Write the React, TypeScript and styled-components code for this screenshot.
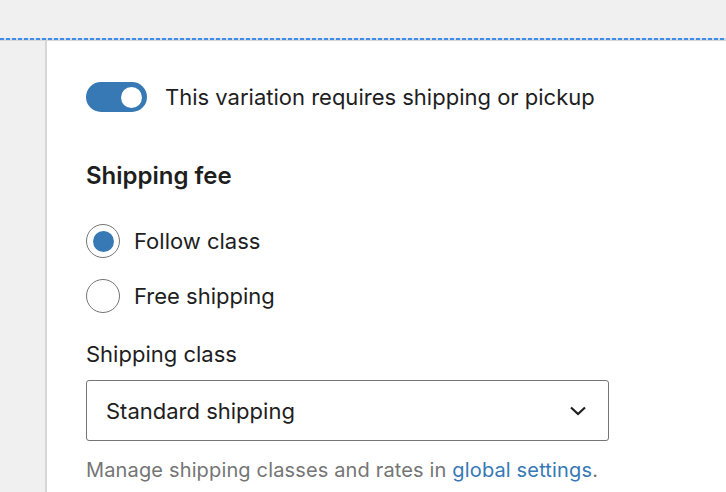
import * as React from 'react';
import styled, { createGlobalStyle } from 'styled-components';

/* ==================== [Style] ==================== */
const Global = createGlobalStyle`
    body {
        margin: 0;
        background: #f0f0f0;
        font-family: Inter, "Noto Sans", sans-serif;
        color: #1e1e1e;
    }
`;

const Page = styled.div`
    display: flex;
    flex-direction: column;
    height: 492px;
    overflow: hidden;
`;

const TopBar = styled.div`
    height: 38px;
    flex-shrink: 0;
`;

// blue focus dashes sitting on the grey edge of the panel
const Divider = styled.div`
    height: 2px;
    flex-shrink: 0;
    background: repeating-linear-gradient(90deg, #3f8de6 0 4px, #d4dbe4 4px 6px);
    border-bottom: 1px solid #d8d8d8;
`;

const Body = styled.div`
    display: flex;
    flex: 1;
`;

const Gutter = styled.div`
    width: 45px;
    flex-shrink: 0;
`;

const Panel = styled.div`
    flex: 1;
    background: #ffffff;
    border-left: 2px solid #d6d6d6;
    padding: 41px 0 0 39px;
    display: flex;
    flex-direction: column;
`;

const ToggleRow = styled.label`
    display: flex;
    align-items: center;
    gap: 18px;
    font-size: 22px;
    line-height: 30px;
`;

const Track = styled.span<{ $on: boolean }>`
    position: relative;
    width: 61px;
    height: 30px;
    border-radius: 15px;
    background: ${p => (p.$on ? '#3679b5' : '#949494')};
    flex-shrink: 0;
`;

const Knob = styled.span<{ $on: boolean }>`
    position: absolute;
    top: 4.5px;
    left: ${p => (p.$on ? '34.5px' : '5px')};
    width: 21px;
    height: 21px;
    border-radius: 50%;
    background: #ffffff;
`;

const Heading = styled.h3`
    margin: 49px 0 0;
    font-size: 24px;
    font-weight: 600;
    line-height: 30px;
`;

const RadioList = styled.div`
    display: flex;
    flex-direction: column;
    gap: 21px;
    margin-top: 33px;
`;

const RadioRow = styled.label`
    display: flex;
    align-items: center;
    gap: 14px;
    font-size: 22px;
    line-height: 34px;
`;

const RadioCircle = styled.span<{ $checked: boolean }>`
    width: 34px;
    height: 34px;
    box-sizing: border-box;
    border-radius: 50%;
    border: 1.5px solid #757575;
    display: flex;
    align-items: center;
    justify-content: center;
    flex-shrink: 0;
    &::after {
        content: '';
        width: 21px;
        height: 21px;
        border-radius: 50%;
        background: ${p => (p.$checked ? '#3679b5' : 'transparent')};
    }
`;

const FieldLabel = styled.div`
    margin-top: 26px;
    font-size: 22px;
    line-height: 30px;
`;

const Select = styled.div`
    margin-top: 11px;
    width: 523px;
    height: 61px;
    box-sizing: border-box;
    border: 1.5px solid #757575;
    border-radius: 3px;
    display: flex;
    align-items: center;
    justify-content: space-between;
    padding: 0 21px 0 19px;
    font-size: 22px;
`;

const Help = styled.p`
    margin: 17px 0 0;
    font-size: 20px;
    letter-spacing: 0.15px;
    line-height: 24px;
    color: #757575;
`;

const Link = styled.a`
    color: #3679b5;
    text-decoration: none;
`;

/* ==================== [Components] ==================== */
const Chevron = () => (
    <svg width="18" height="10" viewBox="0 0 18 10" fill="none">
        <path d="M2 1.5 9 8 16 1.5" stroke="#1e1e1e" strokeWidth="2.2" />
    </svg>
);

export default function App() {
    const [on, setOn] = React.useState(true);
    const [fee, setFee] = React.useState('follow');

    return (
        <Page>
            <Global />
            <TopBar />
            <Divider />
            <Body>
                <Gutter />
                <Panel>
                    <ToggleRow onClick={() => setOn(!on)}>
                        <Track $on={on}>
                            <Knob $on={on} />
                        </Track>
                        This variation requires shipping or pickup
                    </ToggleRow>
                    <Heading>Shipping fee</Heading>
                    <RadioList>
                        <RadioRow onClick={() => setFee('follow')}>
                            <RadioCircle $checked={fee === 'follow'} />
                            Follow class
                        </RadioRow>
                        <RadioRow onClick={() => setFee('free')}>
                            <RadioCircle $checked={fee === 'free'} />
                            Free shipping
                        </RadioRow>
                    </RadioList>
                    <FieldLabel>Shipping class</FieldLabel>
                    <Select>
                        Standard shipping
                        <Chevron />
                    </Select>
                    <Help>
                        Manage shipping classes and rates in <Link href="#">global settings</Link>.
                    </Help>
                </Panel>
            </Body>
        </Page>
    );
}
